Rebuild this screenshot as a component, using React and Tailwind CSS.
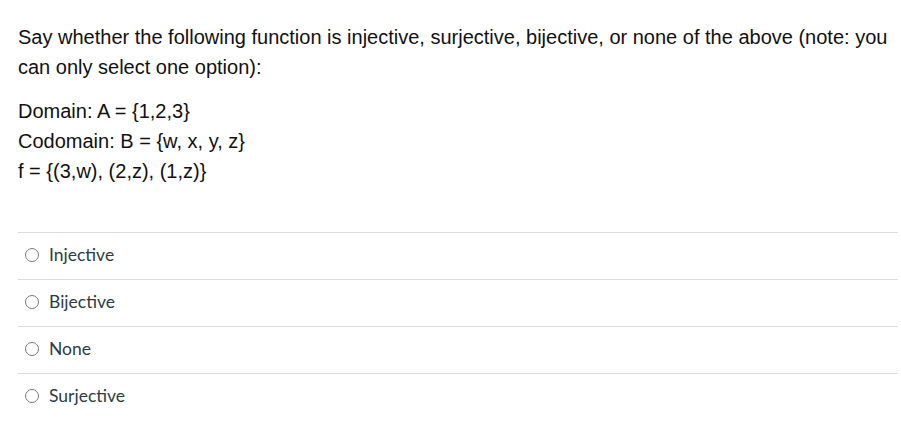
export default function App() {
  const opts = ["Injective", "Bijective", "None", "Surjective"];
  return (
    <div className="w-[901px] h-[428px] bg-white overflow-hidden">
      <div className="pl-[18px] pr-[3px] pt-[22px] leading-[30px] text-[20px] text-[#111]" style={{ fontFamily: '"Liberation Sans", Arial, sans-serif' }}>
        <p>Say whether the following function is injective, surjective, bijective, or none of the above (note: you can only select one option):</p>
        <div className="mt-[14px]">
          <p>Domain: A = {"{1,2,3}"}</p>
          <p>Codomain: B = {"{w, x, y, z}"}</p>
          <p>f = {"{(3,w), (2,z), (1,z)}"}</p>
        </div>
        <div className="mt-[46px]">
          {opts.map((o) => (
            <div key={o} className="flex items-center h-[47px] pb-[3px] border-t border-[#dcdcdc]" style={{ fontFamily: "Lato, sans-serif" }}>
              <span className="ml-[7px] w-[14px] h-[14px] rounded-full border-[1.5px] border-[#7a7a7a] shrink-0" />
              <span className="ml-[10px] text-[17.5px] text-[#2d3b45]">{o}</span>
            </div>
          ))}
        </div>
      </div>
    </div>
  );
}
